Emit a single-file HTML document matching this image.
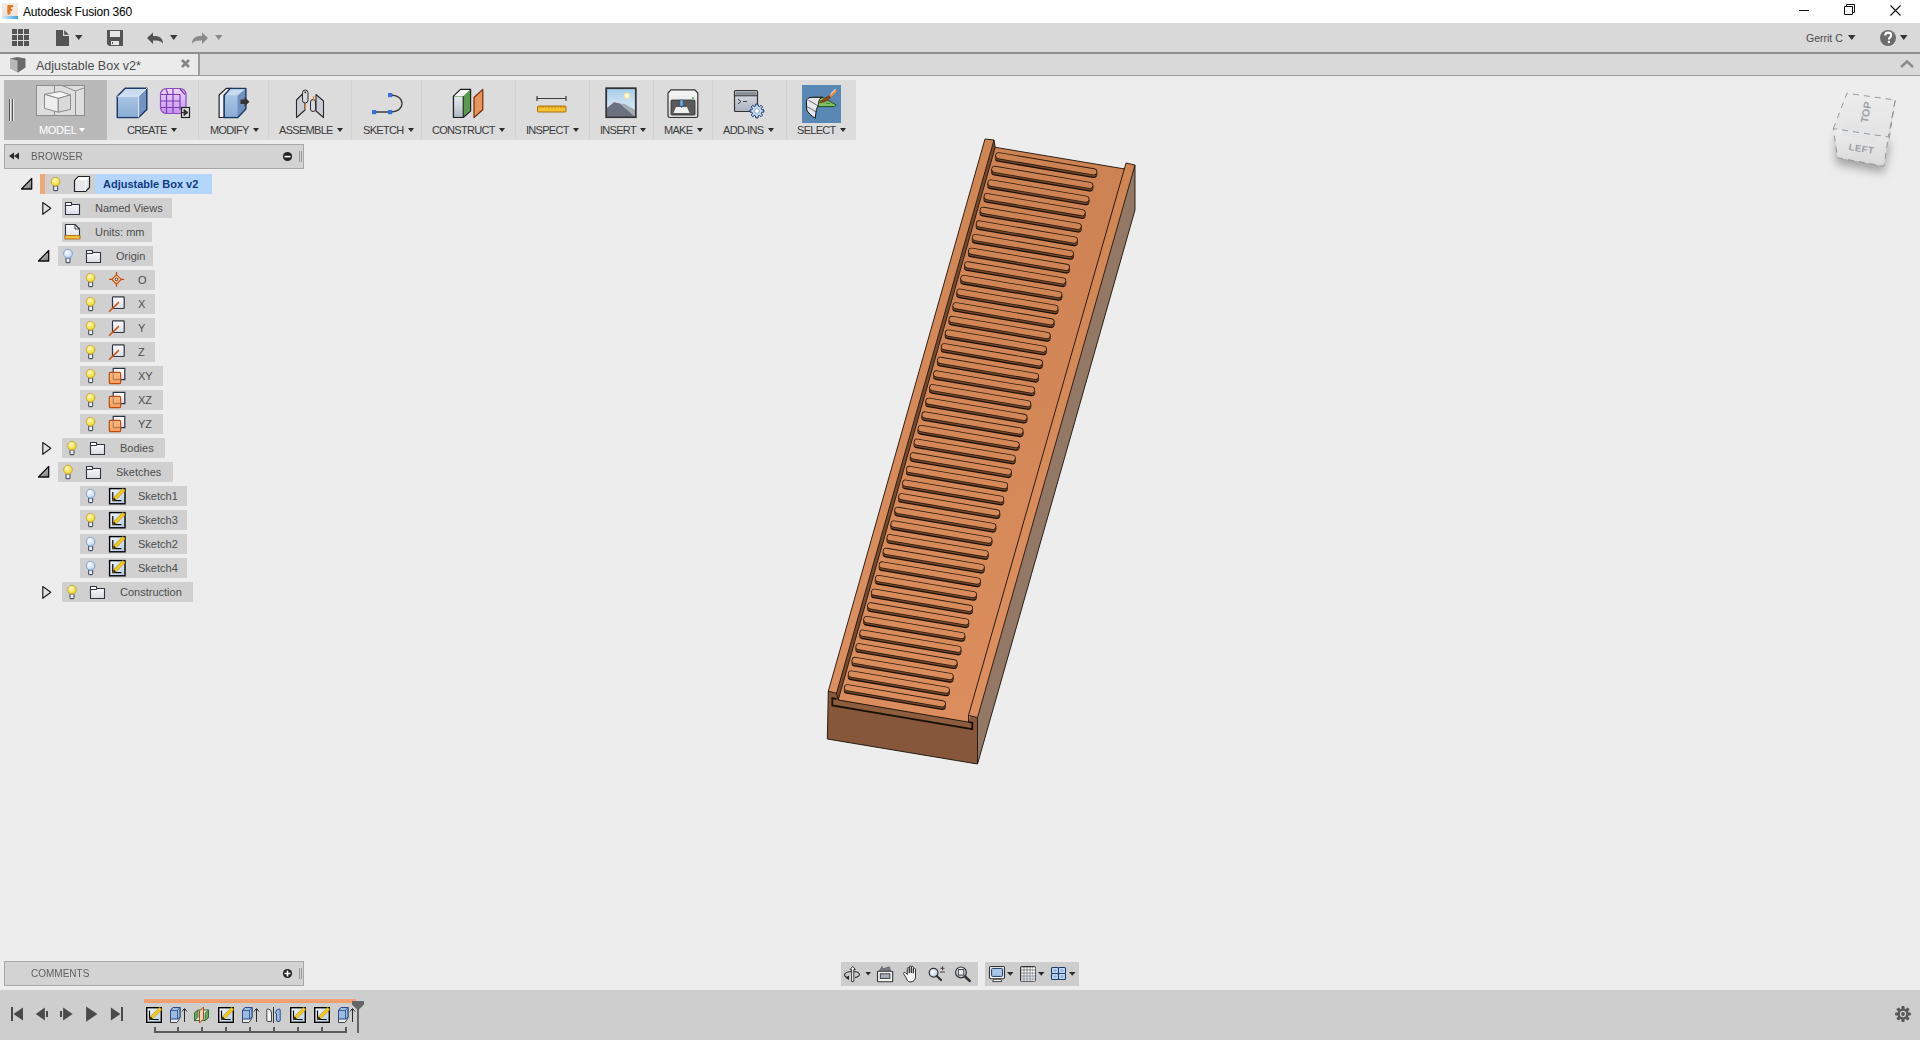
<!DOCTYPE html>
<html><head><meta charset="utf-8">
<style>
*{margin:0;padding:0;box-sizing:border-box}
html,body{width:1920px;height:1040px;overflow:hidden;background:#ededed;font-family:"Liberation Sans",sans-serif;position:relative}
.a{position:absolute}
svg{position:absolute;overflow:visible}
.t{position:absolute;white-space:nowrap;line-height:1}
.sec{position:absolute;top:80px;height:60px;width:1px;background:#d2d2d2}
.lbl{position:absolute;top:125px;font-size:11px;letter-spacing:-0.7px;color:#3a3a3a;white-space:nowrap;line-height:1}
.dd{display:inline-block;width:0;height:0;border-left:3.5px solid transparent;border-right:3.5px solid transparent;border-top:4px solid #2a2a2a;margin-left:4.5px;vertical-align:2px}
.row{position:absolute;height:20px;background:#d0d0d0}
.rt{position:absolute;font-size:11px;color:#4d4d4d;white-space:nowrap;line-height:1}
</style></head><body>
<!-- ============ TITLE BAR ============ -->
<div class="a" style="left:0;top:0;width:1920px;height:23px;background:#fff"></div>
<svg style="left:0;top:0" width="24" height="23">
<defs><linearGradient id="fi" x1="0" y1="0" x2="0" y2="1"><stop offset="0" stop-color="#f4ece6"/><stop offset="1" stop-color="#efe4dc"/></linearGradient>
<linearGradient id="fb" x1="0" y1="0" x2="1" y2="0"><stop offset="0" stop-color="#d8eefc"/><stop offset="1" stop-color="#3aa0e0"/></linearGradient></defs>
<rect x="2" y="3" width="16" height="13" fill="url(#fi)"/>
<rect x="2" y="16" width="16" height="3" fill="url(#fb)"/>
<path d="M7.5 5 L13 5 L13.5 7 L11 7.5 L11 9 L12.5 9 L12 11 L10.5 11 L10.5 14 L8 15 L7.2 12 Z" fill="#e07a28"/>
</svg>
<div class="t" style="left:23px;top:6px;font-size:12px;letter-spacing:-0.2px;color:#000">Autodesk Fusion 360</div>
<svg style="left:1790px;top:0" width="130" height="23">
<rect x="9" y="10" width="10" height="1" fill="#111"/>
<path d="M54.5 6.5 h8 v8 h-8 z M56.5 6.5 v-2 h8 v8 h-2" fill="none" stroke="#111" stroke-width="1"/>
<path d="M100.5 5.5 L110.5 15.5 M110.5 5.5 L100.5 15.5" stroke="#111" stroke-width="1.1"/>
</svg>
<!-- ============ QAT ============ -->
<div class="a" style="left:0;top:23px;width:1920px;height:29px;background:#d9d9d9"></div>
<div class="a" style="left:0;top:52px;width:1920px;height:2px;background:#8e8e8e"></div>
<svg style="left:0;top:23px" width="240" height="29" fill="#545454">
<g><rect x="12" y="6" width="5" height="5"/><rect x="18" y="6" width="5" height="5"/><rect x="24" y="6" width="5" height="5"/>
<rect x="12" y="12" width="5" height="5"/><rect x="18" y="12" width="5" height="5"/><rect x="24" y="12" width="5" height="5"/>
<rect x="12" y="18" width="5" height="5"/><rect x="18" y="18" width="5" height="5"/><rect x="24" y="18" width="5" height="5"/></g>
<path d="M56 7 h7 v6 h6 v10 h-13 z M64.2 7 L69 11.8 h-4.8 z"/>
<path d="M75 12 h7.5 l-3.75 5 z" fill="#3a3a3a"/>
<path d="M107 7 h16 v16 h-14 l-2 -2 z" />
<rect x="110" y="8" width="10" height="6" fill="#e6e6e6"/>
<rect x="111" y="18" width="8" height="4" fill="#e6e6e6"/>
<rect x="112" y="19" width="1" height="2" fill="#545454"/>
<path d="M147 15 L153 9.5 V13 C159 13 163 14.5 163 21 C161.5 18 158.5 17.5 153 17.5 V21 Z"/>
<path d="M170 12 h7.5 l-3.75 5 z" fill="#3a3a3a"/>
<path d="M208 15 L202 9.5 V13 C196 13 192 14.5 192 21 C193.5 18 196.5 17.5 202 17.5 V21 Z" fill="#8a8a8a"/>
<path d="M215 12 h7.5 l-3.75 5 z" fill="#8a8a8a"/>
</svg>
<div class="t" style="left:1806px;top:33px;font-size:10.5px;color:#4a4a4a">Gerrit C</div>
<svg style="left:1840px;top:23px" width="80" height="29">
<path d="M8 12 h7.5 l-3.75 5 z" fill="#333"/>
<circle cx="48" cy="15" r="8" fill="#6c6c6c"/>
<path d="M45.2 12.6 C45.2 10.6 46.5 9.6 48.2 9.6 C50 9.6 51.2 10.7 51.2 12.2 C51.2 14 48.9 14.4 48.9 16.4" fill="none" stroke="#fff" stroke-width="2.1"/>
<rect x="47.8" y="17.8" width="2.2" height="2.3" fill="#fff"/>
<path d="M60 12 h7.5 l-3.75 5 z" fill="#333"/>
</svg>
<!-- ============ TAB BAR ============ -->
<div class="a" style="left:0;top:54px;width:1920px;height:21px;background:#d9d9d9"></div>
<div class="a" style="left:0;top:54px;width:198px;height:21px;background:#ebebeb"></div>
<div class="a" style="left:198px;top:54px;width:2px;height:21px;background:#9c9c9c"></div>
<div class="a" style="left:0;top:75px;width:1920px;height:1px;background:#9c9c9c"></div>
<svg style="left:0;top:54px" width="200" height="21">
<path d="M10 4.5 L17.5 3 L25.5 4.5 V13.5 L18 18.5 L10 14 Z" fill="#6a6a6a"/>
<path d="M10 4.5 L17.5 6.5 V18.5 L10 14 Z" fill="#b8b8b8"/>
<path d="M182 6 L189 13 M189 6 L182 13" stroke="#858585" stroke-width="2.6"/>
</svg>
<div class="t" style="left:36px;top:60px;font-size:12.5px;color:#4a4a4a">Adjustable Box v2*</div>
<svg style="left:1895px;top:54px" width="25" height="21">
<path d="M6 13 L12 7.5 L18 13" fill="none" stroke="#8a8a8a" stroke-width="2.4"/>
</svg>
<!-- ============ TOOLBAR ============ -->
<div class="a" style="left:4px;top:80px;width:852px;height:60px;background:#dcdcdc"></div>
<div class="a" style="left:4px;top:80px;width:103px;height:60px;background:#b9b9b9"></div>
<div class="sec" style="left:198px"></div>
<div class="sec" style="left:268px"></div>
<div class="sec" style="left:351px"></div>
<div class="sec" style="left:421px"></div>
<div class="sec" style="left:515px"></div>
<div class="sec" style="left:589px"></div>
<div class="sec" style="left:653px"></div>
<div class="sec" style="left:712px"></div>
<div class="sec" style="left:786px"></div>
<div class="a" style="left:802px;top:85px;width:39px;height:38px;background:#5a88b4"></div>
<svg style="left:0;top:0" width="860" height="140">
<defs>
<linearGradient id="gblue" x1="0" y1="0" x2="0" y2="1"><stop offset="0" stop-color="#a9c4e4"/><stop offset="1" stop-color="#8badd6"/></linearGradient>
<linearGradient id="gpur" x1="0" y1="0" x2="0" y2="1"><stop offset="0" stop-color="#ecd8fa"/><stop offset="1" stop-color="#c890f0"/></linearGradient>
<linearGradient id="ggray" x1="0" y1="0" x2="0" y2="1"><stop offset="0" stop-color="#e6e9ee"/><stop offset="1" stop-color="#b4bccb"/></linearGradient>
<linearGradient id="gsky" x1="0" y1="0" x2="0" y2="1"><stop offset="0" stop-color="#a6cdea"/><stop offset="1" stop-color="#eaf4fb"/></linearGradient>
<linearGradient id="gwin" x1="0" y1="0" x2="0" y2="1"><stop offset="0" stop-color="#dfe2e8"/><stop offset="1" stop-color="#a9b0c0"/></linearGradient>
<linearGradient id="gmake" x1="0" y1="0" x2="0" y2="1"><stop offset="0" stop-color="#f6f6f6"/><stop offset="1" stop-color="#d6d6d6"/></linearGradient>
</defs>
<!-- grip -->
<rect x="9" y="99" width="1" height="22" fill="#555"/><rect x="12" y="99" width="1" height="22" fill="#555"/>
<rect x="10" y="99" width="1" height="22" fill="#e8e8e8"/><rect x="13" y="99" width="1" height="22" fill="#e8e8e8"/>
<!-- MODEL icon -->
<rect x="36.5" y="85.5" width="48" height="30" fill="#dedede" stroke="#8c8c8c" stroke-width="1"/>
<path d="M54.5 85.5 V115.5 M75.5 91 V115.5 M62 85.5 L75.5 91 L84.5 87.8" fill="none" stroke="#8c8c8c" stroke-width="1"/>
<path d="M44.5 94.3 L60.3 91.5 L70.5 94.9 L58.3 98.4 Z" fill="#f6f6f6" stroke="#8c8c8c"/>
<path d="M44.5 94.3 L58.3 98.4 V112.2 L44.5 108.3 Z" fill="#eeeeee" stroke="#8c8c8c"/>
<path d="M58.3 98.4 L70.5 94.9 V109.4 L58.3 112.2 Z" fill="#dadada" stroke="#8c8c8c"/>
<!-- CREATE box -->
<path d="M117.3 96.2 L125.2 88.2 H146.8 V109.5 L138.6 117.5 H117.3 Z" fill="#7393c0" stroke="#1d3966" stroke-width="1.5" stroke-linejoin="round"/>
<path d="M118.3 96.5 L125.6 89 H146 L138.3 96.5 Z" fill="#c9dcef"/>
<rect x="118" y="96.8" width="20" height="20" fill="url(#gblue)"/>
<path d="M138.6 96.2 H117.3 M138.6 96.2 V117.5 M138.6 96.2 L146.8 88.2" stroke="#e6f0fa" stroke-width="1"/>
<!-- CREATE form -->
<rect x="160.5" y="88.5" width="25.5" height="25" rx="6" fill="url(#gpur)" stroke="#8a4cc0" stroke-width="1.2"/>
<path d="M161 94.5 H180 M161 101 H180 M161 107.5 H180 M166.5 94.5 V113 M173 94.5 V113 M180 94.5 V110 M166 89 L168 94.5 M173 89 L173 94.5 M180 89 L185 94.5" stroke="#7a3cb0" stroke-width="1.2" fill="none"/>
<rect x="181.5" y="107.5" width="8" height="10" fill="#e0e0e0" stroke="#222" stroke-width="1.2"/>
<path d="M181.5 112.5 H184 M184 109.5 L188 112.5 L184 115.5 Z" fill="#333" stroke="#333" stroke-width="1"/>
<!-- MODIFY -->
<path d="M219.1 95 L226.3 88.4 H231 L224.2 95.2 V117.5 H219.1 Z" fill="#f2f2f2" stroke="#222" stroke-width="1.2" stroke-linejoin="round"/>
<path d="M224.2 95.2 L230.3 88.4 H245.9 V109 L237.8 117.5 H224.2 Z" fill="#7090bd" stroke="#1d3966" stroke-width="1.4" stroke-linejoin="round"/>
<path d="M225 95.8 L230.8 89.2 H245 L237.3 95.8 Z" fill="#c9dcef"/>
<rect x="225" y="96" width="12.5" height="20.8" fill="url(#gblue)"/>
<path d="M240.5 99.5 H244.5 V97 L249.5 101.8 L244.5 106.5 V104 H240.5 Z" fill="#333"/>
<!-- ASSEMBLE -->
<path d="M296.5 100 L305 91.5 V110 L296.5 117.5 Z" fill="#c8ccd4" stroke="#2a2a2a" stroke-width="1.1" stroke-linejoin="round"/>
<rect x="302.5" y="90" width="5.5" height="13" rx="2.7" fill="#d6d9de" stroke="#2a2a2a" stroke-width="1"/>
<circle cx="305.3" cy="92.3" r="0.9" fill="#222"/>
<path d="M316 94.5 L323.5 101 V117.5 L316 111 Z" fill="#c8ccd4" stroke="#2a2a2a" stroke-width="1.1" stroke-linejoin="round"/>
<rect x="310.5" y="99.5" width="5" height="12" rx="2.5" fill="#d6d9de" stroke="#2a2a2a" stroke-width="1"/>
<path d="M305.5 103.5 V109 M313.5 96 V100.5" stroke="#f07a10" stroke-width="1"/>
<!-- SKETCH -->
<path d="M374 112 H390 M390 95 C398 95 402 99 402 103.5 C402 108 398 112 390 112" fill="none" stroke="#3c3c3c" stroke-width="1.3"/>
<rect x="372" y="110" width="4.2" height="4.2" fill="#3a6fd8"/><rect x="388" y="110" width="4.2" height="4.2" fill="#3a6fd8"/><rect x="388" y="93" width="4.2" height="4.2" fill="#3a6fd8"/>
<!-- CONSTRUCT -->
<path d="M453.4 96.2 L460.5 89.4 H470.6 V111.1 L463.2 117.5 H453.4 Z" fill="#5b9a4c" stroke="#1e1e1e" stroke-width="1.2" stroke-linejoin="round"/>
<path d="M454.2 96.2 L460.8 90.1 H469.6 L463.2 96.2 Z" fill="#f4f4f6"/>
<rect x="454.2" y="96.8" width="8.7" height="20" fill="url(#ggray)"/>
<path d="M463.2 96.2 V117.5" stroke="#1e1e1e" stroke-width="1"/>
<path d="M474 97.5 L482.8 89.4 V109.7 L474 117.5 Z" fill="#e8945a" stroke="#7a2a06" stroke-width="1.2" stroke-linejoin="round"/>
<!-- INSPECT -->
<path d="M537 98.5 H566 M537 96 V101 M566 96 V101" stroke="#3a3a3a" stroke-width="1.2"/>
<rect x="537.5" y="106" width="28.5" height="6" rx="1" fill="#f2c232" stroke="#b26c10" stroke-width="1"/>
<path d="M540 106.5 V108 M543 106.5 V108 M546 106.5 V108 M549 106.5 V108 M552 106.5 V108 M555 106.5 V108 M558 106.5 V108 M561 106.5 V108 M564 106.5 V108" stroke="#a06010" stroke-width="0.8"/>
<!-- INSERT -->
<rect x="606.3" y="88.3" width="29.4" height="29" fill="url(#gsky)" stroke="#333" stroke-width="1.5"/>
<circle cx="627" cy="95.8" r="2.8" fill="#fffbe0" stroke="#f6e08a" stroke-width="1"/>
<path d="M607 108 L614.5 101.8 L620 103 L636 117 H607 Z" fill="#6a7080"/>
<path d="M614.5 101.8 L620 103 L635.5 116.5" fill="none" stroke="#f0f0f0" stroke-width="0.8"/>
<path d="M620 103.5 L624.7 104.1 L635.5 110 V117 Z" fill="#a3abb5"/>
<rect x="606.3" y="88.3" width="29.4" height="29" fill="none" stroke="#333" stroke-width="1.5"/>
<!-- MAKE -->
<path d="M668 93 L671 89.8 H694.8 L697.8 93 V116 Q697.8 117.5 696 117.5 H670 Q668 117.5 668 116 Z" fill="url(#gmake)" stroke="#333" stroke-width="1.2"/>
<rect x="671" y="100" width="24" height="15" rx="1" fill="#5a5a5a" stroke="#333" stroke-width="0.8"/>
<path d="M673.5 113 L676 107 H687 L689.5 113 Z" fill="#f0f0f0"/>
<rect x="680" y="100" width="3" height="6" fill="#7ab0e0" stroke="#2a5a9a" stroke-width="0.6"/>
<path d="M680 106 L681.5 108 L683 106" fill="#2a5a9a"/>
<rect x="692.2" y="97.3" width="1.5" height="1.5" fill="#10a010"/>
<!-- ADD-INS -->
<rect x="734.5" y="90.5" width="23" height="21" rx="1" fill="url(#gwin)" stroke="#333" stroke-width="1.2"/>
<rect x="735.5" y="91.5" width="21" height="4" fill="#8a909a"/>
<path d="M734.5 95.8 H757.5" stroke="#333" stroke-width="1"/>
<path d="M738 99 L741 101.5 L738 104 M743 101.5 H747" fill="none" stroke="#333" stroke-width="0.9"/>
<path d="M761.97 109.83 L763.81 109.85 L763.81 112.15 L761.97 112.17 L761.31 113.75 L762.60 115.07 L760.97 116.70 L759.65 115.41 L758.07 116.07 L758.05 117.91 L755.75 117.91 L755.73 116.07 L754.15 115.41 L752.83 116.70 L751.20 115.07 L752.49 113.75 L751.83 112.17 L749.99 112.15 L749.99 109.85 L751.83 109.83 L752.49 108.25 L751.20 106.93 L752.83 105.30 L754.15 106.59 L755.73 105.93 L755.75 104.09 L758.05 104.09 L758.07 105.93 L759.65 106.59 L760.97 105.30 L762.60 106.93 L761.31 108.25 Z" fill="#c4dbf2" stroke="#1b3363" stroke-width="1"/>
<circle cx="756.9" cy="111" r="2.4" fill="#fff" stroke="#5a7aa0" stroke-width="0.6"/>
<!-- SELECT -->
<path d="M812 97.3 H822.7 L836.2 105 L834.6 106.6 H818.6 Z" fill="#80c064" stroke="#1d4a12" stroke-width="0.9" stroke-linejoin="round"/>
<path d="M820 101 L824 101 M826 103.5 L830 103.5" stroke="#4a8a36" stroke-width="1.2"/>
<path d="M806.4 101.8 C806.4 98.6 809 97.3 812 97.3 H822.5 C819.6 97.8 818.6 100.5 818.6 104.5 L816.4 109.5 L815.2 118.3 C811 115.5 807.8 112.5 806.8 110 Z" fill="#e6e8ec" stroke="#111" stroke-width="1" stroke-linejoin="round"/>
<path d="M808.5 100.2 L818 105.8 M807.2 106.8 L816.4 112" stroke="#333" stroke-width="0.7"/>
<path d="M819.8 102.2 C822.5 99 826 97 829.5 95.5 L831 97.2 C828.5 100 825 102.5 820.6 103 Z" fill="#8a4a18" stroke="#5a2a08" stroke-width="0.4"/>
<path d="M829.5 95.5 L835 89.5 L837 91.3 L831 97.2 Z" fill="#f09040"/>
<path d="M830.5 94.2 L835.6 89" stroke="#fff" stroke-width="0.9"/>
</svg>
<div class="lbl" style="left:39px;color:#fff;letter-spacing:-0.3px">MODEL<span class="dd" style="border-top-color:#fff;margin-left:2.5px"></span></div>
<div class="lbl" style="left:127px">CREATE<span class="dd"></span></div>
<div class="lbl" style="left:210px">MODIFY<span class="dd"></span></div>
<div class="lbl" style="left:279px">ASSEMBLE<span class="dd"></span></div>
<div class="lbl" style="left:363px">SKETCH<span class="dd"></span></div>
<div class="lbl" style="left:432px">CONSTRUCT<span class="dd"></span></div>
<div class="lbl" style="left:526px">INSPECT<span class="dd"></span></div>
<div class="lbl" style="left:600px">INSERT<span class="dd"></span></div>
<div class="lbl" style="left:664px">MAKE<span class="dd"></span></div>
<div class="lbl" style="left:723px">ADD-INS<span class="dd"></span></div>
<div class="lbl" style="left:797px">SELECT<span class="dd"></span></div>

<!-- ============ BROWSER ============ -->
<div class="a" style="left:4px;top:144px;width:300px;height:25px;background:#d3d3d3;border:1px solid #a8a8a8"></div>
<div class="t" style="left:31px;top:151px;font-size:10px;color:#5e5e5e;transform:scaleY(1.1);transform-origin:0 0">BROWSER</div>
<div class="row" style="left:40px;top:174px;width:5px;background:#f0a878"></div>
<div class="row" style="left:45px;top:174px;width:50px"></div>
<div class="row" style="left:95px;top:174px;width:117px;background:#b4d6fc"></div>
<div class="rt" style="left:103px;top:179px;font-weight:bold;color:#103a80;font-size:11px">Adjustable Box v2</div>
<div class="row" style="left:62px;top:198px;width:110px"></div>
<div class="rt" style="left:95px;top:203px">Named Views</div>
<div class="row" style="left:62px;top:222px;width:90px"></div>
<div class="rt" style="left:95px;top:227px">Units: mm</div>
<div class="row" style="left:58px;top:246px;width:95px"></div>
<div class="rt" style="left:116px;top:251px">Origin</div>
<div class="row" style="left:80px;top:270px;width:75px"></div>
<div class="rt" style="left:138px;top:275px">O</div>
<div class="row" style="left:80px;top:294px;width:75px"></div>
<div class="rt" style="left:138px;top:299px">X</div>
<div class="row" style="left:80px;top:318px;width:75px"></div>
<div class="rt" style="left:138px;top:323px">Y</div>
<div class="row" style="left:80px;top:342px;width:75px"></div>
<div class="rt" style="left:138px;top:347px">Z</div>
<div class="row" style="left:80px;top:366px;width:83px"></div>
<div class="rt" style="left:138px;top:371px">XY</div>
<div class="row" style="left:80px;top:390px;width:83px"></div>
<div class="rt" style="left:138px;top:395px">XZ</div>
<div class="row" style="left:80px;top:414px;width:83px"></div>
<div class="rt" style="left:138px;top:419px">YZ</div>
<div class="row" style="left:62px;top:438px;width:103px"></div>
<div class="rt" style="left:120px;top:443px">Bodies</div>
<div class="row" style="left:58px;top:462px;width:115px"></div>
<div class="rt" style="left:116px;top:467px">Sketches</div>
<div class="row" style="left:80px;top:486px;width:107px"></div>
<div class="rt" style="left:138px;top:491px">Sketch1</div>
<div class="row" style="left:80px;top:510px;width:107px"></div>
<div class="rt" style="left:138px;top:515px">Sketch3</div>
<div class="row" style="left:80px;top:534px;width:107px"></div>
<div class="rt" style="left:138px;top:539px">Sketch2</div>
<div class="row" style="left:80px;top:558px;width:107px"></div>
<div class="rt" style="left:138px;top:563px">Sketch4</div>
<div class="row" style="left:62px;top:582px;width:131px"></div>
<div class="rt" style="left:120px;top:587px">Construction</div>
<svg style="left:0;top:0" width="320" height="620">
<defs>
<radialGradient id="by" cx="0.4" cy="0.35" r="0.7"><stop offset="0" stop-color="#fffbd0"/><stop offset="0.5" stop-color="#f8e860"/><stop offset="1" stop-color="#e8c830"/></radialGradient>
<radialGradient id="bb" cx="0.4" cy="0.35" r="0.7"><stop offset="0" stop-color="#ffffff"/><stop offset="0.6" stop-color="#d4e2f8"/><stop offset="1" stop-color="#b0c8ee"/></radialGradient>
<linearGradient id="tg" x1="0" y1="0" x2="1" y2="1"><stop offset="0" stop-color="#f0f0f0"/><stop offset="1" stop-color="#707070"/></linearGradient>
<linearGradient id="fg" x1="0" y1="0" x2="0" y2="1"><stop offset="0" stop-color="#ffffff"/><stop offset="1" stop-color="#d8dce4"/></linearGradient>
<linearGradient id="sg" x1="0" y1="0" x2="1" y2="1"><stop offset="0" stop-color="#f4f8fc"/><stop offset="1" stop-color="#b4cce6"/></linearGradient>
<linearGradient id="og" x1="0" y1="0" x2="0" y2="1"><stop offset="0" stop-color="#ffc08a"/><stop offset="1" stop-color="#f89a58"/></linearGradient>
</defs>
<path d="M9 156 L14 152.5 V159.5 Z M14 156 L19 152.5 V159.5 Z" fill="#2a2a2a"/>
<circle cx="287.5" cy="156.5" r="4.6" fill="#222"/><rect x="284.5" y="155.8" width="6" height="1.6" fill="#fff"/>
<path d="M299.5 151 V162 M301.5 151 V162" stroke="#888" stroke-width="0.8"/>
<path d="M21.5 189 L31.7 178.5 V189 Z" fill="url(#tg)" stroke="#111" stroke-width="1.3" stroke-linejoin="round"/>
<rect x="53.6" y="186" width="4" height="4.6" rx="0.8" fill="#eceef2" stroke="#4e5464" stroke-width="1.1"/>
<circle cx="55.6" cy="181.7" r="4.4" fill="url(#by)" stroke="#c8a030" stroke-width="0.9"/>
<path d="M74.5 180.5 L78.5 176.5 H89.5 V187.5 L85.5 191.5 H74.5 Z" fill="#e6e8ec" stroke="#222" stroke-width="1.2" stroke-linejoin="round"/>
<path d="M75.2 180.5 L78.8 177.2 H88.5 L85.5 180.5 Z" fill="#fff"/>
<path d="M85.5 180.5 L89 177" stroke="#fff" stroke-width="1"/><path d="M85.5 181 V191" stroke="#fafafa" stroke-width="1"/>
<path d="M42.8 202.5 L50.8 208.2 L42.8 214.3 Z" fill="#e4e4e4" stroke="#1e1e1e" stroke-width="1.2" stroke-linejoin="round"/>
<path d="M65.5 202.5 H71.5 V204.5 H79.5 V214.5 H65.5 Z" fill="url(#fg)" stroke="#2e3440" stroke-width="1.1" stroke-linejoin="round"/>
<path d="M65.5 205.5 H71.5 L72.5 204.5" fill="none" stroke="#2e3440" stroke-width="1"/>
<path d="M65.5 224.5 H75 L79.5 229 V238.5 H65.5 Z" fill="url(#fg)" stroke="#2e3440" stroke-width="1.1" stroke-linejoin="round"/>
<path d="M75 224.5 V229 H79.5" fill="none" stroke="#2e3440" stroke-width="0.9"/>
<rect x="65" y="235.5" width="15" height="3.5" fill="#f2c232" stroke="#a06010" stroke-width="0.8"/>
<path d="M38.5 261 L48.7 250.5 V261 Z" fill="url(#tg)" stroke="#111" stroke-width="1.3" stroke-linejoin="round"/>
<rect x="66" y="258" width="4" height="4.6" rx="0.8" fill="#eceef2" stroke="#4e5464" stroke-width="1.1"/>
<circle cx="68" cy="253.7" r="4.4" fill="url(#bb)" stroke="#7898c8" stroke-width="0.9"/>
<path d="M86.5 250.5 H92.5 V252.5 H100.5 V262.5 H86.5 Z" fill="url(#fg)" stroke="#2e3440" stroke-width="1.1" stroke-linejoin="round"/>
<path d="M86.5 253.5 H92.5 L93.5 252.5" fill="none" stroke="#2e3440" stroke-width="1"/>
<rect x="88.6" y="282" width="4" height="4.6" rx="0.8" fill="#eceef2" stroke="#4e5464" stroke-width="1.1"/>
<circle cx="90.6" cy="277.7" r="4.4" fill="url(#by)" stroke="#c8a030" stroke-width="0.9"/>
<path d="M109.1 279.4 H123.9 M116.5 272.0 V286.79999999999995" stroke="#c84a08" stroke-width="1.2"/>
<path d="M111.8 279.4 L116.5 274.7 L121.2 279.4 L116.5 284.09999999999997 Z" fill="#ffc8a0" stroke="#c84a08" stroke-width="1.1"/>
<circle cx="116.5" cy="279.4" r="1.3" fill="#fff" stroke="#222" stroke-width="0.9"/>
<rect x="88.6" y="306" width="4" height="4.6" rx="0.8" fill="#eceef2" stroke="#4e5464" stroke-width="1.1"/>
<circle cx="90.6" cy="301.7" r="4.4" fill="url(#by)" stroke="#c8a030" stroke-width="0.9"/>
<rect x="112.5" y="296.8" width="11.7" height="11.7" rx="0.8" fill="url(#fg)" stroke="#2e3440" stroke-width="1.2"/>
<path d="M109.5 311.2 L118.5 302.6" stroke="#d05010" stroke-width="1.5" stroke-linecap="round"/>
<rect x="88.6" y="330" width="4" height="4.6" rx="0.8" fill="#eceef2" stroke="#4e5464" stroke-width="1.1"/>
<circle cx="90.6" cy="325.7" r="4.4" fill="url(#by)" stroke="#c8a030" stroke-width="0.9"/>
<rect x="112.5" y="320.8" width="11.7" height="11.7" rx="0.8" fill="url(#fg)" stroke="#2e3440" stroke-width="1.2"/>
<path d="M109.5 335.2 L118.5 326.6" stroke="#d05010" stroke-width="1.5" stroke-linecap="round"/>
<rect x="88.6" y="354" width="4" height="4.6" rx="0.8" fill="#eceef2" stroke="#4e5464" stroke-width="1.1"/>
<circle cx="90.6" cy="349.7" r="4.4" fill="url(#by)" stroke="#c8a030" stroke-width="0.9"/>
<rect x="112.5" y="344.8" width="11.7" height="11.7" rx="0.8" fill="url(#fg)" stroke="#2e3440" stroke-width="1.2"/>
<path d="M109.5 359.2 L118.5 350.6" stroke="#d05010" stroke-width="1.5" stroke-linecap="round"/>
<rect x="88.6" y="378" width="4" height="4.6" rx="0.8" fill="#eceef2" stroke="#4e5464" stroke-width="1.1"/>
<circle cx="90.6" cy="373.7" r="4.4" fill="url(#by)" stroke="#c8a030" stroke-width="0.9"/>
<path d="M113.2 372 V368.4 H124.8 V379.7 H121" fill="url(#fg)" stroke="#2e3440" stroke-width="1.2"/>
<rect x="109.3" y="372.3" width="11.3" height="11.3" rx="1" fill="url(#og)" stroke="#c04c10" stroke-width="1.2"/>
<path d="M113.2 373 V379.6 H120" fill="none" stroke="#8a6a50" stroke-width="0.8"/>
<rect x="88.6" y="402" width="4" height="4.6" rx="0.8" fill="#eceef2" stroke="#4e5464" stroke-width="1.1"/>
<circle cx="90.6" cy="397.7" r="4.4" fill="url(#by)" stroke="#c8a030" stroke-width="0.9"/>
<path d="M113.2 396 V392.4 H124.8 V403.7 H121" fill="url(#fg)" stroke="#2e3440" stroke-width="1.2"/>
<rect x="109.3" y="396.3" width="11.3" height="11.3" rx="1" fill="url(#og)" stroke="#c04c10" stroke-width="1.2"/>
<path d="M113.2 397 V403.6 H120" fill="none" stroke="#8a6a50" stroke-width="0.8"/>
<rect x="88.6" y="426" width="4" height="4.6" rx="0.8" fill="#eceef2" stroke="#4e5464" stroke-width="1.1"/>
<circle cx="90.6" cy="421.7" r="4.4" fill="url(#by)" stroke="#c8a030" stroke-width="0.9"/>
<path d="M113.2 420 V416.4 H124.8 V427.7 H121" fill="url(#fg)" stroke="#2e3440" stroke-width="1.2"/>
<rect x="109.3" y="420.3" width="11.3" height="11.3" rx="1" fill="url(#og)" stroke="#c04c10" stroke-width="1.2"/>
<path d="M113.2 421 V427.6 H120" fill="none" stroke="#8a6a50" stroke-width="0.8"/>
<path d="M42.8 442.5 L50.8 448.2 L42.8 454.3 Z" fill="#e4e4e4" stroke="#1e1e1e" stroke-width="1.2" stroke-linejoin="round"/>
<rect x="70" y="450" width="4" height="4.6" rx="0.8" fill="#eceef2" stroke="#4e5464" stroke-width="1.1"/>
<circle cx="72" cy="445.7" r="4.4" fill="url(#by)" stroke="#c8a030" stroke-width="0.9"/>
<path d="M90.5 442.5 H96.5 V444.5 H104.5 V454.5 H90.5 Z" fill="url(#fg)" stroke="#2e3440" stroke-width="1.1" stroke-linejoin="round"/>
<path d="M90.5 445.5 H96.5 L97.5 444.5" fill="none" stroke="#2e3440" stroke-width="1"/>
<path d="M38.5 477 L48.7 466.5 V477 Z" fill="url(#tg)" stroke="#111" stroke-width="1.3" stroke-linejoin="round"/>
<rect x="66" y="474" width="4" height="4.6" rx="0.8" fill="#eceef2" stroke="#4e5464" stroke-width="1.1"/>
<circle cx="68" cy="469.7" r="4.4" fill="url(#by)" stroke="#c8a030" stroke-width="0.9"/>
<path d="M86.5 466.5 H92.5 V468.5 H100.5 V478.5 H86.5 Z" fill="url(#fg)" stroke="#2e3440" stroke-width="1.1" stroke-linejoin="round"/>
<path d="M86.5 469.5 H92.5 L93.5 468.5" fill="none" stroke="#2e3440" stroke-width="1"/>
<rect x="88.6" y="498" width="4" height="4.6" rx="0.8" fill="#eceef2" stroke="#4e5464" stroke-width="1.1"/>
<circle cx="90.6" cy="493.7" r="4.4" fill="url(#bb)" stroke="#7898c8" stroke-width="0.9"/>
<rect x="109.6" y="488.6" width="15.4" height="15.2" fill="url(#sg)" stroke="#000" stroke-width="1.4"/>
<path d="M112.8 492 V500.6 H121.5" fill="none" stroke="#000" stroke-width="1.2"/>
<path d="M112.8 500.6 L113.6 497.6 L122.8 488.4 L125.2 490.6 L116 499.8 Z" fill="#f0c820" stroke="#b08000" stroke-width="0.5"/>
<path d="M112.8 500.6 L113.8 497.6 L116 499.6 Z" fill="#222"/>
<rect x="88.6" y="522" width="4" height="4.6" rx="0.8" fill="#eceef2" stroke="#4e5464" stroke-width="1.1"/>
<circle cx="90.6" cy="517.7" r="4.4" fill="url(#by)" stroke="#c8a030" stroke-width="0.9"/>
<rect x="109.6" y="512.6" width="15.4" height="15.2" fill="url(#sg)" stroke="#000" stroke-width="1.4"/>
<path d="M112.8 516 V524.6 H121.5" fill="none" stroke="#000" stroke-width="1.2"/>
<path d="M112.8 524.6 L113.6 521.6 L122.8 512.4 L125.2 514.6 L116 523.8 Z" fill="#f0c820" stroke="#b08000" stroke-width="0.5"/>
<path d="M112.8 524.6 L113.8 521.6 L116 523.6 Z" fill="#222"/>
<rect x="88.6" y="546" width="4" height="4.6" rx="0.8" fill="#eceef2" stroke="#4e5464" stroke-width="1.1"/>
<circle cx="90.6" cy="541.7" r="4.4" fill="url(#bb)" stroke="#7898c8" stroke-width="0.9"/>
<rect x="109.6" y="536.6" width="15.4" height="15.2" fill="url(#sg)" stroke="#000" stroke-width="1.4"/>
<path d="M112.8 540 V548.6 H121.5" fill="none" stroke="#000" stroke-width="1.2"/>
<path d="M112.8 548.6 L113.6 545.6 L122.8 536.4 L125.2 538.6 L116 547.8 Z" fill="#f0c820" stroke="#b08000" stroke-width="0.5"/>
<path d="M112.8 548.6 L113.8 545.6 L116 547.6 Z" fill="#222"/>
<rect x="88.6" y="570" width="4" height="4.6" rx="0.8" fill="#eceef2" stroke="#4e5464" stroke-width="1.1"/>
<circle cx="90.6" cy="565.7" r="4.4" fill="url(#bb)" stroke="#7898c8" stroke-width="0.9"/>
<rect x="109.6" y="560.6" width="15.4" height="15.2" fill="url(#sg)" stroke="#000" stroke-width="1.4"/>
<path d="M112.8 564 V572.6 H121.5" fill="none" stroke="#000" stroke-width="1.2"/>
<path d="M112.8 572.6 L113.6 569.6 L122.8 560.4 L125.2 562.6 L116 571.8 Z" fill="#f0c820" stroke="#b08000" stroke-width="0.5"/>
<path d="M112.8 572.6 L113.8 569.6 L116 571.6 Z" fill="#222"/>
<path d="M42.8 586.5 L50.8 592.2 L42.8 598.3 Z" fill="#e4e4e4" stroke="#1e1e1e" stroke-width="1.2" stroke-linejoin="round"/>
<rect x="70" y="594" width="4" height="4.6" rx="0.8" fill="#eceef2" stroke="#4e5464" stroke-width="1.1"/>
<circle cx="72" cy="589.7" r="4.4" fill="url(#by)" stroke="#c8a030" stroke-width="0.9"/>
<path d="M90.5 586.5 H96.5 V588.5 H104.5 V598.5 H90.5 Z" fill="url(#fg)" stroke="#2e3440" stroke-width="1.1" stroke-linejoin="round"/>
<path d="M90.5 589.5 H96.5 L97.5 588.5" fill="none" stroke="#2e3440" stroke-width="1"/>
</svg>
<!-- ============ COMMENTS ============ -->
<div class="a" style="left:4px;top:961px;width:300px;height:25px;background:#d3d3d3;border:1px solid #a8a8a8"></div>
<div class="t" style="left:31px;top:968px;font-size:10px;color:#5e5e5e;transform:scaleY(1.1);transform-origin:0 0">COMMENTS</div>
<svg style="left:0;top:0" width="320" height="1040">
<circle cx="287.5" cy="973.5" r="4.6" fill="#222"/><path d="M284.5 973.5 H290.5 M287.5 970.5 V976.5" stroke="#fff" stroke-width="1.6"/>
<path d="M299.5 968 V979 M301.5 968 V979" stroke="#888" stroke-width="0.8"/>
</svg>
<!-- ============ NAV BAR ============ -->
<div class="a" style="left:841px;top:962px;width:137px;height:24px;background:#cdcdcd"></div>
<div class="a" style="left:985px;top:962px;width:94px;height:24px;background:#cdcdcd"></div>
<svg style="left:0;top:0" width="1100" height="1000">
<defs>
<linearGradient id="gscr" x1="0" y1="0" x2="0" y2="1"><stop offset="0" stop-color="#a8c4e4"/><stop offset="1" stop-color="#7aa0d0"/></linearGradient>
<radialGradient id="glens" cx="0.4" cy="0.4" r="0.6"><stop offset="0" stop-color="#ffffff"/><stop offset="1" stop-color="#b0c8e0"/></radialGradient>
</defs>
<!-- orbit -->
<path d="M848.5 977.8 C842 976.5 843.5 971.5 852.5 971.5 C861 971.5 861.5 976.5 855 977.6" fill="none" stroke="#2a2a2a" stroke-width="1.1"/>
<path d="M845.5 977.8 L849 975.6 V980 Z" fill="#222"/>
<path d="M851.6 981.6 V969.6 H850 L852.7 966.4 L855.4 969.6 H853.8 V981.6 Z" fill="#f6f6f6" stroke="#2a2a2a" stroke-width="0.9" stroke-linejoin="round"/>
<path d="M865.4 972 h5.6 l-2.8 3.5 z" fill="#2a2a2a"/>
<!-- look at -->
<path d="M879 971.5 L882 966.5 L883 969 L887 967.5 L889.5 967 L890.5 971.5 Z" fill="#7a7e86" stroke="#444" stroke-width="0.6"/>
<rect x="877.5" y="971.3" width="15.2" height="10.4" rx="0.8" fill="#f2f2f2" stroke="#333" stroke-width="1.1"/>
<rect x="880.3" y="973.8" width="9.6" height="4.6" fill="#a8b0c0" stroke="#333" stroke-width="0.9"/>
<!-- pan hand -->
<path d="M906 977.5 L903.8 974.2 C903 973 904.2 971.8 905.4 972.6 L907.3 974.5 V968.5 C907.3 967.3 909.3 967.3 909.3 968.5 V973 V966.8 C909.3 965.6 911.3 965.6 911.3 966.8 V973 V967.2 C911.3 966 913.3 966 913.3 967.2 V973.2 V969.2 C913.3 968 915.5 968 915.5 969.2 V977 C915.5 980 913.5 981.8 911 981.8 H909.5 C907.5 981.8 907 979.5 906 977.5 Z" fill="#f4f4f6" stroke="#333" stroke-width="1"/>
<!-- zoom -->
<circle cx="933.6" cy="972.8" r="4.4" fill="url(#glens)" stroke="#333" stroke-width="1.2"/>
<path d="M936.8 976 L941 980" stroke="#333" stroke-width="2.4" stroke-linecap="round"/>
<path d="M942.5 966.3 v4 M940.5 968.3 h4 M940 972 h5" stroke="#333" stroke-width="0.9"/>
<!-- fit -->
<circle cx="961" cy="972.4" r="5.4" fill="url(#glens)" stroke="#333" stroke-width="1.2"/>
<rect x="958.3" y="969.6" width="5.5" height="5.5" fill="#eceef2" stroke="#333" stroke-width="0.9"/>
<path d="M965 976.5 L969.8 981" stroke="#333" stroke-width="2.4" stroke-linecap="round"/>
<!-- display -->
<defs><linearGradient id="ggrid" x1="0" y1="0" x2="0" y2="1"><stop offset="0" stop-color="#4a4a4a"/><stop offset="1" stop-color="#8890a0"/></linearGradient></defs>
<rect x="989.5" y="966.5" width="15" height="12.2" rx="1.2" fill="#f4f4f4" stroke="#333" stroke-width="1.1"/>
<rect x="991.6" y="968.4" width="11" height="8" rx="1" fill="#a8c6e8" stroke="#1e3a6a" stroke-width="1"/>
<path d="M993.5 979.3 H1001 L1001.8 981.6 H992.7 Z" fill="#f6f6f6" stroke="#333" stroke-width="0.9" stroke-linejoin="round"/>
<path d="M1007 972 h6.5 l-3.25 3.8 z" fill="#2a2a2a"/>
<!-- grid -->
<rect x="1020.5" y="966.5" width="15" height="15" rx="1.2" fill="url(#ggrid)" stroke="#333" stroke-width="1"/>
<g fill="#fff">
<rect x="1021.35" y="967.35" width="2.3" height="2.3"/><rect x="1024.35" y="967.35" width="2.3" height="2.3"/><rect x="1027.35" y="967.35" width="2.3" height="2.3"/><rect x="1030.35" y="967.35" width="2.3" height="2.3"/><rect x="1032.95" y="967.35" width="2.3" height="2.3"/>
<rect x="1021.35" y="970.35" width="2.3" height="2.3"/><rect x="1024.35" y="970.35" width="2.3" height="2.3"/><rect x="1027.35" y="970.35" width="2.3" height="2.3"/><rect x="1030.35" y="970.35" width="2.3" height="2.3"/><rect x="1032.95" y="970.35" width="2.3" height="2.3"/>
<rect x="1021.35" y="973.35" width="2.3" height="2.3" opacity="0.9"/><rect x="1024.35" y="973.35" width="2.3" height="2.3" opacity="0.9"/><rect x="1027.35" y="973.35" width="2.3" height="2.3" opacity="0.9"/><rect x="1030.35" y="973.35" width="2.3" height="2.3" opacity="0.9"/><rect x="1032.95" y="973.35" width="2.3" height="2.3" opacity="0.9"/>
<rect x="1021.35" y="976.35" width="2.3" height="2.3" opacity="0.8"/><rect x="1024.35" y="976.35" width="2.3" height="2.3" opacity="0.8"/><rect x="1027.35" y="976.35" width="2.3" height="2.3" opacity="0.8"/><rect x="1030.35" y="976.35" width="2.3" height="2.3" opacity="0.8"/><rect x="1032.95" y="976.35" width="2.3" height="2.3" opacity="0.8"/>
<rect x="1021.35" y="979.15" width="2.3" height="2.3" opacity="0.7"/><rect x="1024.35" y="979.15" width="2.3" height="2.3" opacity="0.7"/><rect x="1027.35" y="979.15" width="2.3" height="2.3" opacity="0.7"/><rect x="1030.35" y="979.15" width="2.3" height="2.3" opacity="0.7"/><rect x="1032.95" y="979.15" width="2.3" height="2.3" opacity="0.7"/>
</g>
<path d="M1038 972 h6.5 l-3.25 3.8 z" fill="#2a2a2a"/>
<!-- layout -->
<g fill="#c4dcf4" stroke="#1e3a6a" stroke-width="1.1">
<rect x="1051.5" y="967.5" width="7" height="6" rx="1"/><rect x="1058.5" y="967.5" width="7" height="6" rx="1"/>
<rect x="1051.5" y="973.5" width="7" height="6" rx="1"/><rect x="1058.5" y="973.5" width="7" height="6" rx="1"/>
</g>
<g fill="#8eb0d8"><rect x="1053.5" y="969.3" width="3" height="2.4"/><rect x="1060.5" y="969.3" width="3" height="2.4"/><rect x="1053.5" y="975.3" width="3" height="2.4"/><rect x="1060.5" y="975.3" width="3" height="2.4"/></g>
<path d="M1069 972 h6.5 l-3.25 3.8 z" fill="#2a2a2a"/>
</svg>
<!-- ============ TIMELINE ============ -->
<div class="a" style="left:0;top:990px;width:1920px;height:50px;background:#cecece"></div>
<svg style="left:0;top:990px" width="1920" height="50">
<defs>
<linearGradient id="tsg" x1="0" y1="0" x2="1" y2="1"><stop offset="0" stop-color="#f4f8fc"/><stop offset="1" stop-color="#b4cce6"/></linearGradient>
<linearGradient id="tbg" x1="0" y1="0" x2="1" y2="0"><stop offset="0" stop-color="#c8dcf4"/><stop offset="1" stop-color="#88a8d4"/></linearGradient>
</defs>
<g fill="#4a4a4a">
<rect x="11" y="17" width="2" height="14"/><path d="M23 17.5 L13.5 24 L23 30.5 Z"/>
<path d="M35.7 24 L44.9 17.5 V30.5 Z"/><rect x="46" y="21" width="2" height="6"/>
<rect x="60" y="21" width="2" height="6"/><path d="M63.1 17.5 L72.6 24 L63.1 30.5 Z"/>
<path d="M86.1 16.4 L97.4 24 L86.1 31.7 Z"/>
<path d="M110.9 17.5 L120.4 24 L110.9 30.5 Z"/><rect x="121" y="17" width="2" height="14"/>
</g>
<rect x="144" y="9" width="212" height="4" fill="#f2a070"/>
<path d="M155 37 V42 H346 V37 M178 37 V42 M202 37 V42 M226 37 V42 M250 37 V42 M274 37 V42 M298 37 V42 M322 37 V42" fill="none" stroke="#5a5a5a" stroke-width="2"/>
<path d="M352 11 H364 V14.5 L359 19.5 V43 H357 V19.5 L352 14.5 Z" fill="#666"/>
<rect x="146.7" y="17.7" width="14.6" height="14.6" fill="url(#tsg)" stroke="#000" stroke-width="1.4"/>
<path d="M149.5 20.5 V29.5 H158.5" fill="none" stroke="#000" stroke-width="1.2"/>
<path d="M149.5 29.5 L150.5 26.5 L159.5 17.2 L162 19.6 L153 28.6 Z" fill="#f0c820" stroke="#b08000" stroke-width="0.5"/>
<path d="M149.5 29.5 L150.7 26.6 L152.9 28.5 Z" fill="#222"/>
<path d="M170.5 20.5 L173 17.5 H180 V28 L177 32.5 H170.5 Z" fill="#e8ecf2" stroke="#444" stroke-width="1"/>
<path d="M170.5 20.5 L173 17.5 H180 V27 L177.5 29 H170.5 Z" fill="#9abce0" stroke="#2a4a8a" stroke-width="1"/>
<path d="M177.5 20.5 V29 M170.5 20.5 H177.5 L180 17.5" fill="none" stroke="#2a4a8a" stroke-width="0.8"/>
<path d="M184.5 32 V19 M182 21.5 L184.5 18.5 L187 21.5" fill="none" stroke="#2a2a2a" stroke-width="1"/>
<path d="M194.5 23 L198 20 H208.5 V27.5 L205 30.5 H194.5 Z" fill="#f0f0f0" stroke="#2a6a2a" stroke-width="1"/>
<path d="M194.5 23 L198 20 V27.5 L194.5 30.5 Z M205 23 L208.5 20 V27.5 L205 30.5 Z" fill="#6aa860" stroke="#2a6a2a" stroke-width="0.8"/>
<path d="M199.5 21 L203.5 17 V29 L199.5 33 Z" fill="#f0d0c0" stroke="#b04a10" stroke-width="1"/>
<rect x="218.7" y="17.7" width="14.6" height="14.6" fill="url(#tsg)" stroke="#000" stroke-width="1.4"/>
<path d="M221.5 20.5 V29.5 H230.5" fill="none" stroke="#000" stroke-width="1.2"/>
<path d="M221.5 29.5 L222.5 26.5 L231.5 17.2 L234 19.6 L225 28.6 Z" fill="#f0c820" stroke="#b08000" stroke-width="0.5"/>
<path d="M221.5 29.5 L222.7 26.6 L224.9 28.5 Z" fill="#222"/>
<path d="M242.5 20.5 L245 17.5 H252 V28 L249 32.5 H242.5 Z" fill="#e8ecf2" stroke="#444" stroke-width="1"/>
<path d="M242.5 20.5 L245 17.5 H252 V27 L249.5 29 H242.5 Z" fill="#9abce0" stroke="#2a4a8a" stroke-width="1"/>
<path d="M249.5 20.5 V29 M242.5 20.5 H249.5 L252 17.5" fill="none" stroke="#2a4a8a" stroke-width="0.8"/>
<path d="M256.5 32 V19 M254 21.5 L256.5 18.5 L259 21.5" fill="none" stroke="#2a2a2a" stroke-width="1"/>
<path d="M266.8 20 Q266.8 19 268 19 L270.5 20 L271.5 23 V31.5 H268 Q266.8 31.5 266.8 30 Z" fill="#f4f4f4" stroke="#444" stroke-width="1"/>
<path d="M273.5 17 V33" stroke="#333" stroke-width="1"/>
<path d="M280.2 20 Q280.2 19 279 19 L276.5 20 L275.5 23 L276.5 24 V30 Q276.5 31.5 278 31.5 H279 Q280.2 31.5 280.2 30 Z" fill="#9abce0" stroke="#2a4a8a" stroke-width="1"/>
<rect x="290.7" y="17.7" width="14.6" height="14.6" fill="url(#tsg)" stroke="#000" stroke-width="1.4"/>
<path d="M293.5 20.5 V29.5 H302.5" fill="none" stroke="#000" stroke-width="1.2"/>
<path d="M293.5 29.5 L294.5 26.5 L303.5 17.2 L306 19.6 L297 28.6 Z" fill="#f0c820" stroke="#b08000" stroke-width="0.5"/>
<path d="M293.5 29.5 L294.7 26.6 L296.9 28.5 Z" fill="#222"/>
<rect x="314.7" y="17.7" width="14.6" height="14.6" fill="url(#tsg)" stroke="#000" stroke-width="1.4"/>
<path d="M317.5 20.5 V29.5 H326.5" fill="none" stroke="#000" stroke-width="1.2"/>
<path d="M317.5 29.5 L318.5 26.5 L327.5 17.2 L330 19.6 L321 28.6 Z" fill="#f0c820" stroke="#b08000" stroke-width="0.5"/>
<path d="M317.5 29.5 L318.7 26.6 L320.9 28.5 Z" fill="#222"/>
<path d="M338.5 20.5 L341 17.5 H348 V28 L345 32.5 H338.5 Z" fill="#e8ecf2" stroke="#444" stroke-width="1"/>
<path d="M338.5 20.5 L341 17.5 H348 V27 L345.5 29 H338.5 Z" fill="#9abce0" stroke="#2a4a8a" stroke-width="1"/>
<path d="M345.5 20.5 V29 M338.5 20.5 H345.5 L348 17.5" fill="none" stroke="#2a4a8a" stroke-width="0.8"/>
<path d="M352.5 32 V19 M350 21.5 L352.5 18.5 L355 21.5" fill="none" stroke="#2a2a2a" stroke-width="1"/>
<!-- gear -->
<g transform="translate(1903 1014)" fill="#555">
</g>
</svg>
<svg style="left:1895px;top:1006px" width="16" height="16" viewBox="-8 -8 16 16">
<g fill="#585858">
<circle r="5.6"/>
<rect x="-1.6" y="-8" width="3.2" height="16" rx="1"/>
<rect x="-1.6" y="-8" width="3.2" height="16" rx="1" transform="rotate(45)"/>
<rect x="-1.6" y="-8" width="3.2" height="16" rx="1" transform="rotate(90)"/>
<rect x="-1.6" y="-8" width="3.2" height="16" rx="1" transform="rotate(135)"/>
</g>
<circle r="3.2" fill="#cecece"/><circle r="1.9" fill="#585858"/>
</svg>

<!-- ============ VIEWCUBE ============ -->
<svg style="left:1800px;top:80px" width="120" height="110">
<defs>
<filter id="blur" x="-50%" y="-50%" width="200%" height="200%"><feGaussianBlur stdDeviation="5"/></filter>
<linearGradient id="vcf" x1="0" y1="0" x2="0" y2="1"><stop offset="0" stop-color="#ededed"/><stop offset="1" stop-color="#d9d9d9"/></linearGradient>
<linearGradient id="vct" x1="0" y1="0" x2="0" y2="1"><stop offset="0" stop-color="#ececec"/><stop offset="1" stop-color="#e4e4e4"/></linearGradient>
</defs>
<polygon points="36,84 84,93 90,62 36,55" fill="#8a8a8a" opacity="0.75" filter="url(#blur)"/>
<polygon points="47,13.2 95.2,20 88.3,57 33.3,48.6" fill="url(#vct)"/>
<polygon points="33.3,48.6 88.3,57 84,86.2 37.5,77.7" fill="url(#vcf)"/>
<polygon points="95.2,20 88.3,57 84,86.2 89,60" fill="#d4d4d4"/>
<polygon points="44,43 79,49 77.5,62 42.5,56" fill="#e2e3e6" opacity="0.8"/>
<g fill="none" stroke="#8e8e8e" stroke-width="0.9" stroke-dasharray="6,5">
<polyline points="33.3,48.6 47,13.2 95.2,20 88.3,57 33.3,48.6 37.5,77.7 84,86.2 88.3,57"/>
<line x1="95.2" y1="20" x2="89" y2="60"/>
</g>
<text x="0" y="0" transform="translate(69.5 33) rotate(-80)" font-family="Liberation Sans" font-weight="bold" font-size="10.5" fill="#9aa0a6" text-anchor="middle">TOP</text>
<text x="0" y="0" transform="translate(61 72) rotate(9)" font-family="Liberation Sans" font-weight="bold" font-size="9.5" fill="#9aa0a6" text-anchor="middle" letter-spacing="0.5">LEFT</text>
</svg>

<svg style="left:0;top:0" width="1920" height="1040">
<defs><linearGradient id="flg" gradientUnits="userSpaceOnUse" x1="0" y1="140" x2="0" y2="720"><stop offset="0" stop-color="#cd8253"/><stop offset="1" stop-color="#db8d5d"/></linearGradient><linearGradient id="wlg" gradientUnits="userSpaceOnUse" x1="0" y1="140" x2="0" y2="720"><stop offset="0" stop-color="#d08555"/><stop offset="1" stop-color="#dd8f5f"/></linearGradient></defs>
<polygon points="1135.0,165.0 1135.0,210.0 977.5,764.0 977.5,717.5" fill="#947866"/>
<polygon points="828.3,691.2 836.5,693.3 838.2,700.0 968.5,722.1 968.5,715.4 977.5,717.5 977.5,764.0 827.3,739.0" fill="#86573a"/>
<polygon points="995.2,147.3 1125.0,169.0 968.5,722.1 838.2,700.0" fill="url(#flg)"/>
<polygon points="985.0,139.0 994.0,140.0 836.5,693.3 828.3,691.2" fill="url(#wlg)"/>
<polygon points="994.0,140.0 995.2,147.3 838.2,700.0 836.5,693.3" fill="#7a4a2c"/>
<polygon points="1126.0,163.0 1135.0,165.0 977.5,717.5 968.5,715.4" fill="url(#wlg)"/>
<polygon points="832.3,698.2 836.5,699.2 968.5,722.1 972.3,722.7 972.3,729.2 832.3,705.4" fill="#8d5d3e"/>
<polyline points="836.5,699.2 832.3,698.2 832.3,705.4 972.3,729.2 972.3,722.7 968.5,722.1" fill="none" stroke="#1a1008" stroke-width="1.8"/>
<line x1="998.7" y1="158.3" x2="1093.7" y2="174.4" stroke="#1a1008" stroke-width="7.2" stroke-linecap="round"/>
<line x1="998.7" y1="157.1" x2="1093.7" y2="173.2" stroke="#74462a" stroke-width="7.0" stroke-linecap="round"/>
<line x1="998.7" y1="155.7" x2="1093.7" y2="171.8" stroke="#2a1a0e" stroke-width="7.0" stroke-linecap="round"/>
<line x1="998.7" y1="155.7" x2="1093.7" y2="171.8" stroke="url(#flg)" stroke-width="5.4" stroke-linecap="round"/>
<line x1="994.8" y1="171.9" x2="1089.8" y2="188.0" stroke="#1a1008" stroke-width="7.2" stroke-linecap="round"/>
<line x1="994.8" y1="170.7" x2="1089.8" y2="186.8" stroke="#74462a" stroke-width="7.0" stroke-linecap="round"/>
<line x1="994.8" y1="169.3" x2="1089.8" y2="185.4" stroke="#2a1a0e" stroke-width="7.0" stroke-linecap="round"/>
<line x1="994.8" y1="169.3" x2="1089.8" y2="185.4" stroke="url(#flg)" stroke-width="5.4" stroke-linecap="round"/>
<line x1="990.9" y1="185.6" x2="1085.9" y2="201.7" stroke="#1a1008" stroke-width="7.2" stroke-linecap="round"/>
<line x1="990.9" y1="184.4" x2="1085.9" y2="200.5" stroke="#74462a" stroke-width="7.0" stroke-linecap="round"/>
<line x1="990.9" y1="183.0" x2="1085.9" y2="199.1" stroke="#2a1a0e" stroke-width="7.0" stroke-linecap="round"/>
<line x1="990.9" y1="183.0" x2="1085.9" y2="199.1" stroke="url(#flg)" stroke-width="5.4" stroke-linecap="round"/>
<line x1="987.1" y1="199.2" x2="1082.1" y2="215.3" stroke="#1a1008" stroke-width="7.2" stroke-linecap="round"/>
<line x1="987.1" y1="198.0" x2="1082.1" y2="214.1" stroke="#74462a" stroke-width="7.0" stroke-linecap="round"/>
<line x1="987.1" y1="196.6" x2="1082.1" y2="212.7" stroke="#2a1a0e" stroke-width="7.0" stroke-linecap="round"/>
<line x1="987.1" y1="196.6" x2="1082.1" y2="212.7" stroke="url(#flg)" stroke-width="5.4" stroke-linecap="round"/>
<line x1="983.2" y1="212.9" x2="1078.2" y2="229.0" stroke="#1a1008" stroke-width="7.2" stroke-linecap="round"/>
<line x1="983.2" y1="211.7" x2="1078.2" y2="227.8" stroke="#74462a" stroke-width="7.0" stroke-linecap="round"/>
<line x1="983.2" y1="210.3" x2="1078.2" y2="226.4" stroke="#2a1a0e" stroke-width="7.0" stroke-linecap="round"/>
<line x1="983.2" y1="210.3" x2="1078.2" y2="226.4" stroke="url(#flg)" stroke-width="5.4" stroke-linecap="round"/>
<line x1="979.3" y1="226.5" x2="1074.3" y2="242.6" stroke="#1a1008" stroke-width="7.2" stroke-linecap="round"/>
<line x1="979.3" y1="225.3" x2="1074.3" y2="241.4" stroke="#74462a" stroke-width="7.0" stroke-linecap="round"/>
<line x1="979.3" y1="223.9" x2="1074.3" y2="240.0" stroke="#2a1a0e" stroke-width="7.0" stroke-linecap="round"/>
<line x1="979.3" y1="223.9" x2="1074.3" y2="240.0" stroke="url(#flg)" stroke-width="5.4" stroke-linecap="round"/>
<line x1="975.4" y1="240.1" x2="1070.4" y2="256.2" stroke="#1a1008" stroke-width="7.2" stroke-linecap="round"/>
<line x1="975.4" y1="238.9" x2="1070.4" y2="255.0" stroke="#74462a" stroke-width="7.0" stroke-linecap="round"/>
<line x1="975.4" y1="237.5" x2="1070.4" y2="253.6" stroke="#2a1a0e" stroke-width="7.0" stroke-linecap="round"/>
<line x1="975.4" y1="237.5" x2="1070.4" y2="253.6" stroke="url(#flg)" stroke-width="5.4" stroke-linecap="round"/>
<line x1="971.5" y1="253.8" x2="1066.5" y2="269.9" stroke="#1a1008" stroke-width="7.2" stroke-linecap="round"/>
<line x1="971.5" y1="252.6" x2="1066.5" y2="268.7" stroke="#74462a" stroke-width="7.0" stroke-linecap="round"/>
<line x1="971.5" y1="251.2" x2="1066.5" y2="267.3" stroke="#2a1a0e" stroke-width="7.0" stroke-linecap="round"/>
<line x1="971.5" y1="251.2" x2="1066.5" y2="267.3" stroke="url(#flg)" stroke-width="5.4" stroke-linecap="round"/>
<line x1="967.7" y1="267.4" x2="1062.7" y2="283.5" stroke="#1a1008" stroke-width="7.2" stroke-linecap="round"/>
<line x1="967.7" y1="266.2" x2="1062.7" y2="282.3" stroke="#74462a" stroke-width="7.0" stroke-linecap="round"/>
<line x1="967.7" y1="264.8" x2="1062.7" y2="280.9" stroke="#2a1a0e" stroke-width="7.0" stroke-linecap="round"/>
<line x1="967.7" y1="264.8" x2="1062.7" y2="280.9" stroke="url(#flg)" stroke-width="5.4" stroke-linecap="round"/>
<line x1="963.8" y1="281.1" x2="1058.8" y2="297.2" stroke="#1a1008" stroke-width="7.2" stroke-linecap="round"/>
<line x1="963.8" y1="279.9" x2="1058.8" y2="296.0" stroke="#74462a" stroke-width="7.0" stroke-linecap="round"/>
<line x1="963.8" y1="278.5" x2="1058.8" y2="294.6" stroke="#2a1a0e" stroke-width="7.0" stroke-linecap="round"/>
<line x1="963.8" y1="278.5" x2="1058.8" y2="294.6" stroke="url(#flg)" stroke-width="5.4" stroke-linecap="round"/>
<line x1="959.9" y1="294.7" x2="1054.9" y2="310.8" stroke="#1a1008" stroke-width="7.2" stroke-linecap="round"/>
<line x1="959.9" y1="293.5" x2="1054.9" y2="309.6" stroke="#74462a" stroke-width="7.0" stroke-linecap="round"/>
<line x1="959.9" y1="292.1" x2="1054.9" y2="308.2" stroke="#2a1a0e" stroke-width="7.0" stroke-linecap="round"/>
<line x1="959.9" y1="292.1" x2="1054.9" y2="308.2" stroke="url(#flg)" stroke-width="5.4" stroke-linecap="round"/>
<line x1="956.0" y1="308.3" x2="1051.0" y2="324.4" stroke="#1a1008" stroke-width="7.2" stroke-linecap="round"/>
<line x1="956.0" y1="307.1" x2="1051.0" y2="323.2" stroke="#74462a" stroke-width="7.0" stroke-linecap="round"/>
<line x1="956.0" y1="305.7" x2="1051.0" y2="321.8" stroke="#2a1a0e" stroke-width="7.0" stroke-linecap="round"/>
<line x1="956.0" y1="305.7" x2="1051.0" y2="321.8" stroke="url(#flg)" stroke-width="5.4" stroke-linecap="round"/>
<line x1="952.1" y1="322.0" x2="1047.1" y2="338.1" stroke="#1a1008" stroke-width="7.2" stroke-linecap="round"/>
<line x1="952.1" y1="320.8" x2="1047.1" y2="336.9" stroke="#74462a" stroke-width="7.0" stroke-linecap="round"/>
<line x1="952.1" y1="319.4" x2="1047.1" y2="335.5" stroke="#2a1a0e" stroke-width="7.0" stroke-linecap="round"/>
<line x1="952.1" y1="319.4" x2="1047.1" y2="335.5" stroke="url(#flg)" stroke-width="5.4" stroke-linecap="round"/>
<line x1="948.3" y1="335.6" x2="1043.3" y2="351.7" stroke="#1a1008" stroke-width="7.2" stroke-linecap="round"/>
<line x1="948.3" y1="334.4" x2="1043.3" y2="350.5" stroke="#74462a" stroke-width="7.0" stroke-linecap="round"/>
<line x1="948.3" y1="333.0" x2="1043.3" y2="349.1" stroke="#2a1a0e" stroke-width="7.0" stroke-linecap="round"/>
<line x1="948.3" y1="333.0" x2="1043.3" y2="349.1" stroke="url(#flg)" stroke-width="5.4" stroke-linecap="round"/>
<line x1="944.4" y1="349.3" x2="1039.4" y2="365.4" stroke="#1a1008" stroke-width="7.2" stroke-linecap="round"/>
<line x1="944.4" y1="348.1" x2="1039.4" y2="364.2" stroke="#74462a" stroke-width="7.0" stroke-linecap="round"/>
<line x1="944.4" y1="346.7" x2="1039.4" y2="362.8" stroke="#2a1a0e" stroke-width="7.0" stroke-linecap="round"/>
<line x1="944.4" y1="346.7" x2="1039.4" y2="362.8" stroke="url(#flg)" stroke-width="5.4" stroke-linecap="round"/>
<line x1="940.5" y1="362.9" x2="1035.5" y2="379.0" stroke="#1a1008" stroke-width="7.2" stroke-linecap="round"/>
<line x1="940.5" y1="361.7" x2="1035.5" y2="377.8" stroke="#74462a" stroke-width="7.0" stroke-linecap="round"/>
<line x1="940.5" y1="360.3" x2="1035.5" y2="376.4" stroke="#2a1a0e" stroke-width="7.0" stroke-linecap="round"/>
<line x1="940.5" y1="360.3" x2="1035.5" y2="376.4" stroke="url(#flg)" stroke-width="5.4" stroke-linecap="round"/>
<line x1="936.6" y1="376.5" x2="1031.6" y2="392.6" stroke="#1a1008" stroke-width="7.2" stroke-linecap="round"/>
<line x1="936.6" y1="375.3" x2="1031.6" y2="391.4" stroke="#74462a" stroke-width="7.0" stroke-linecap="round"/>
<line x1="936.6" y1="373.9" x2="1031.6" y2="390.0" stroke="#2a1a0e" stroke-width="7.0" stroke-linecap="round"/>
<line x1="936.6" y1="373.9" x2="1031.6" y2="390.0" stroke="url(#flg)" stroke-width="5.4" stroke-linecap="round"/>
<line x1="932.7" y1="390.2" x2="1027.7" y2="406.3" stroke="#1a1008" stroke-width="7.2" stroke-linecap="round"/>
<line x1="932.7" y1="389.0" x2="1027.7" y2="405.1" stroke="#74462a" stroke-width="7.0" stroke-linecap="round"/>
<line x1="932.7" y1="387.6" x2="1027.7" y2="403.7" stroke="#2a1a0e" stroke-width="7.0" stroke-linecap="round"/>
<line x1="932.7" y1="387.6" x2="1027.7" y2="403.7" stroke="url(#flg)" stroke-width="5.4" stroke-linecap="round"/>
<line x1="928.9" y1="403.8" x2="1023.9" y2="419.9" stroke="#1a1008" stroke-width="7.2" stroke-linecap="round"/>
<line x1="928.9" y1="402.6" x2="1023.9" y2="418.7" stroke="#74462a" stroke-width="7.0" stroke-linecap="round"/>
<line x1="928.9" y1="401.2" x2="1023.9" y2="417.3" stroke="#2a1a0e" stroke-width="7.0" stroke-linecap="round"/>
<line x1="928.9" y1="401.2" x2="1023.9" y2="417.3" stroke="url(#flg)" stroke-width="5.4" stroke-linecap="round"/>
<line x1="925.0" y1="417.5" x2="1020.0" y2="433.6" stroke="#1a1008" stroke-width="7.2" stroke-linecap="round"/>
<line x1="925.0" y1="416.3" x2="1020.0" y2="432.4" stroke="#74462a" stroke-width="7.0" stroke-linecap="round"/>
<line x1="925.0" y1="414.9" x2="1020.0" y2="431.0" stroke="#2a1a0e" stroke-width="7.0" stroke-linecap="round"/>
<line x1="925.0" y1="414.9" x2="1020.0" y2="431.0" stroke="url(#flg)" stroke-width="5.4" stroke-linecap="round"/>
<line x1="921.1" y1="431.1" x2="1016.1" y2="447.2" stroke="#1a1008" stroke-width="7.2" stroke-linecap="round"/>
<line x1="921.1" y1="429.9" x2="1016.1" y2="446.0" stroke="#74462a" stroke-width="7.0" stroke-linecap="round"/>
<line x1="921.1" y1="428.5" x2="1016.1" y2="444.6" stroke="#2a1a0e" stroke-width="7.0" stroke-linecap="round"/>
<line x1="921.1" y1="428.5" x2="1016.1" y2="444.6" stroke="url(#flg)" stroke-width="5.4" stroke-linecap="round"/>
<line x1="917.2" y1="444.7" x2="1012.2" y2="460.8" stroke="#1a1008" stroke-width="7.2" stroke-linecap="round"/>
<line x1="917.2" y1="443.5" x2="1012.2" y2="459.6" stroke="#74462a" stroke-width="7.0" stroke-linecap="round"/>
<line x1="917.2" y1="442.1" x2="1012.2" y2="458.2" stroke="#2a1a0e" stroke-width="7.0" stroke-linecap="round"/>
<line x1="917.2" y1="442.1" x2="1012.2" y2="458.2" stroke="url(#flg)" stroke-width="5.4" stroke-linecap="round"/>
<line x1="913.3" y1="458.4" x2="1008.3" y2="474.5" stroke="#1a1008" stroke-width="7.2" stroke-linecap="round"/>
<line x1="913.3" y1="457.2" x2="1008.3" y2="473.3" stroke="#74462a" stroke-width="7.0" stroke-linecap="round"/>
<line x1="913.3" y1="455.8" x2="1008.3" y2="471.9" stroke="#2a1a0e" stroke-width="7.0" stroke-linecap="round"/>
<line x1="913.3" y1="455.8" x2="1008.3" y2="471.9" stroke="url(#flg)" stroke-width="5.4" stroke-linecap="round"/>
<line x1="909.5" y1="472.0" x2="1004.5" y2="488.1" stroke="#1a1008" stroke-width="7.2" stroke-linecap="round"/>
<line x1="909.5" y1="470.8" x2="1004.5" y2="486.9" stroke="#74462a" stroke-width="7.0" stroke-linecap="round"/>
<line x1="909.5" y1="469.4" x2="1004.5" y2="485.5" stroke="#2a1a0e" stroke-width="7.0" stroke-linecap="round"/>
<line x1="909.5" y1="469.4" x2="1004.5" y2="485.5" stroke="url(#flg)" stroke-width="5.4" stroke-linecap="round"/>
<line x1="905.6" y1="485.7" x2="1000.6" y2="501.8" stroke="#1a1008" stroke-width="7.2" stroke-linecap="round"/>
<line x1="905.6" y1="484.5" x2="1000.6" y2="500.6" stroke="#74462a" stroke-width="7.0" stroke-linecap="round"/>
<line x1="905.6" y1="483.1" x2="1000.6" y2="499.2" stroke="#2a1a0e" stroke-width="7.0" stroke-linecap="round"/>
<line x1="905.6" y1="483.1" x2="1000.6" y2="499.2" stroke="url(#flg)" stroke-width="5.4" stroke-linecap="round"/>
<line x1="901.7" y1="499.3" x2="996.7" y2="515.4" stroke="#1a1008" stroke-width="7.2" stroke-linecap="round"/>
<line x1="901.7" y1="498.1" x2="996.7" y2="514.2" stroke="#74462a" stroke-width="7.0" stroke-linecap="round"/>
<line x1="901.7" y1="496.7" x2="996.7" y2="512.8" stroke="#2a1a0e" stroke-width="7.0" stroke-linecap="round"/>
<line x1="901.7" y1="496.7" x2="996.7" y2="512.8" stroke="url(#flg)" stroke-width="5.4" stroke-linecap="round"/>
<line x1="897.8" y1="512.9" x2="992.8" y2="529.0" stroke="#1a1008" stroke-width="7.2" stroke-linecap="round"/>
<line x1="897.8" y1="511.7" x2="992.8" y2="527.8" stroke="#74462a" stroke-width="7.0" stroke-linecap="round"/>
<line x1="897.8" y1="510.3" x2="992.8" y2="526.4" stroke="#2a1a0e" stroke-width="7.0" stroke-linecap="round"/>
<line x1="897.8" y1="510.3" x2="992.8" y2="526.4" stroke="url(#flg)" stroke-width="5.4" stroke-linecap="round"/>
<line x1="893.9" y1="526.6" x2="988.9" y2="542.7" stroke="#1a1008" stroke-width="7.2" stroke-linecap="round"/>
<line x1="893.9" y1="525.4" x2="988.9" y2="541.5" stroke="#74462a" stroke-width="7.0" stroke-linecap="round"/>
<line x1="893.9" y1="524.0" x2="988.9" y2="540.1" stroke="#2a1a0e" stroke-width="7.0" stroke-linecap="round"/>
<line x1="893.9" y1="524.0" x2="988.9" y2="540.1" stroke="url(#flg)" stroke-width="5.4" stroke-linecap="round"/>
<line x1="890.1" y1="540.2" x2="985.1" y2="556.3" stroke="#1a1008" stroke-width="7.2" stroke-linecap="round"/>
<line x1="890.1" y1="539.0" x2="985.1" y2="555.1" stroke="#74462a" stroke-width="7.0" stroke-linecap="round"/>
<line x1="890.1" y1="537.6" x2="985.1" y2="553.7" stroke="#2a1a0e" stroke-width="7.0" stroke-linecap="round"/>
<line x1="890.1" y1="537.6" x2="985.1" y2="553.7" stroke="url(#flg)" stroke-width="5.4" stroke-linecap="round"/>
<line x1="886.2" y1="553.9" x2="981.2" y2="570.0" stroke="#1a1008" stroke-width="7.2" stroke-linecap="round"/>
<line x1="886.2" y1="552.7" x2="981.2" y2="568.8" stroke="#74462a" stroke-width="7.0" stroke-linecap="round"/>
<line x1="886.2" y1="551.3" x2="981.2" y2="567.4" stroke="#2a1a0e" stroke-width="7.0" stroke-linecap="round"/>
<line x1="886.2" y1="551.3" x2="981.2" y2="567.4" stroke="url(#flg)" stroke-width="5.4" stroke-linecap="round"/>
<line x1="882.3" y1="567.5" x2="977.3" y2="583.6" stroke="#1a1008" stroke-width="7.2" stroke-linecap="round"/>
<line x1="882.3" y1="566.3" x2="977.3" y2="582.4" stroke="#74462a" stroke-width="7.0" stroke-linecap="round"/>
<line x1="882.3" y1="564.9" x2="977.3" y2="581.0" stroke="#2a1a0e" stroke-width="7.0" stroke-linecap="round"/>
<line x1="882.3" y1="564.9" x2="977.3" y2="581.0" stroke="url(#flg)" stroke-width="5.4" stroke-linecap="round"/>
<line x1="878.4" y1="581.1" x2="973.4" y2="597.2" stroke="#1a1008" stroke-width="7.2" stroke-linecap="round"/>
<line x1="878.4" y1="579.9" x2="973.4" y2="596.0" stroke="#74462a" stroke-width="7.0" stroke-linecap="round"/>
<line x1="878.4" y1="578.5" x2="973.4" y2="594.6" stroke="#2a1a0e" stroke-width="7.0" stroke-linecap="round"/>
<line x1="878.4" y1="578.5" x2="973.4" y2="594.6" stroke="url(#flg)" stroke-width="5.4" stroke-linecap="round"/>
<line x1="874.5" y1="594.8" x2="969.5" y2="610.9" stroke="#1a1008" stroke-width="7.2" stroke-linecap="round"/>
<line x1="874.5" y1="593.6" x2="969.5" y2="609.7" stroke="#74462a" stroke-width="7.0" stroke-linecap="round"/>
<line x1="874.5" y1="592.2" x2="969.5" y2="608.3" stroke="#2a1a0e" stroke-width="7.0" stroke-linecap="round"/>
<line x1="874.5" y1="592.2" x2="969.5" y2="608.3" stroke="url(#flg)" stroke-width="5.4" stroke-linecap="round"/>
<line x1="870.7" y1="608.4" x2="965.7" y2="624.5" stroke="#1a1008" stroke-width="7.2" stroke-linecap="round"/>
<line x1="870.7" y1="607.2" x2="965.7" y2="623.3" stroke="#74462a" stroke-width="7.0" stroke-linecap="round"/>
<line x1="870.7" y1="605.8" x2="965.7" y2="621.9" stroke="#2a1a0e" stroke-width="7.0" stroke-linecap="round"/>
<line x1="870.7" y1="605.8" x2="965.7" y2="621.9" stroke="url(#flg)" stroke-width="5.4" stroke-linecap="round"/>
<line x1="866.8" y1="622.1" x2="961.8" y2="638.2" stroke="#1a1008" stroke-width="7.2" stroke-linecap="round"/>
<line x1="866.8" y1="620.9" x2="961.8" y2="637.0" stroke="#74462a" stroke-width="7.0" stroke-linecap="round"/>
<line x1="866.8" y1="619.5" x2="961.8" y2="635.6" stroke="#2a1a0e" stroke-width="7.0" stroke-linecap="round"/>
<line x1="866.8" y1="619.5" x2="961.8" y2="635.6" stroke="url(#flg)" stroke-width="5.4" stroke-linecap="round"/>
<line x1="862.9" y1="635.7" x2="957.9" y2="651.8" stroke="#1a1008" stroke-width="7.2" stroke-linecap="round"/>
<line x1="862.9" y1="634.5" x2="957.9" y2="650.6" stroke="#74462a" stroke-width="7.0" stroke-linecap="round"/>
<line x1="862.9" y1="633.1" x2="957.9" y2="649.2" stroke="#2a1a0e" stroke-width="7.0" stroke-linecap="round"/>
<line x1="862.9" y1="633.1" x2="957.9" y2="649.2" stroke="url(#flg)" stroke-width="5.4" stroke-linecap="round"/>
<line x1="859.0" y1="649.3" x2="954.0" y2="665.4" stroke="#1a1008" stroke-width="7.2" stroke-linecap="round"/>
<line x1="859.0" y1="648.1" x2="954.0" y2="664.2" stroke="#74462a" stroke-width="7.0" stroke-linecap="round"/>
<line x1="859.0" y1="646.7" x2="954.0" y2="662.8" stroke="#2a1a0e" stroke-width="7.0" stroke-linecap="round"/>
<line x1="859.0" y1="646.7" x2="954.0" y2="662.8" stroke="url(#flg)" stroke-width="5.4" stroke-linecap="round"/>
<line x1="855.1" y1="663.0" x2="950.1" y2="679.1" stroke="#1a1008" stroke-width="7.2" stroke-linecap="round"/>
<line x1="855.1" y1="661.8" x2="950.1" y2="677.9" stroke="#74462a" stroke-width="7.0" stroke-linecap="round"/>
<line x1="855.1" y1="660.4" x2="950.1" y2="676.5" stroke="#2a1a0e" stroke-width="7.0" stroke-linecap="round"/>
<line x1="855.1" y1="660.4" x2="950.1" y2="676.5" stroke="url(#flg)" stroke-width="5.4" stroke-linecap="round"/>
<line x1="851.3" y1="676.6" x2="946.3" y2="692.7" stroke="#1a1008" stroke-width="7.2" stroke-linecap="round"/>
<line x1="851.3" y1="675.4" x2="946.3" y2="691.5" stroke="#74462a" stroke-width="7.0" stroke-linecap="round"/>
<line x1="851.3" y1="674.0" x2="946.3" y2="690.1" stroke="#2a1a0e" stroke-width="7.0" stroke-linecap="round"/>
<line x1="851.3" y1="674.0" x2="946.3" y2="690.1" stroke="url(#flg)" stroke-width="5.4" stroke-linecap="round"/>
<line x1="847.4" y1="690.3" x2="942.4" y2="706.4" stroke="#1a1008" stroke-width="7.2" stroke-linecap="round"/>
<line x1="847.4" y1="689.1" x2="942.4" y2="705.2" stroke="#74462a" stroke-width="7.0" stroke-linecap="round"/>
<line x1="847.4" y1="687.7" x2="942.4" y2="703.8" stroke="#2a1a0e" stroke-width="7.0" stroke-linecap="round"/>
<line x1="847.4" y1="687.7" x2="942.4" y2="703.8" stroke="url(#flg)" stroke-width="5.4" stroke-linecap="round"/>
<polyline points="828.3,691.2 985.0,139.0 994.0,140.0 995.2,147.3 1125.0,169.0" fill="none" stroke="#1a1008" stroke-width="0.9"/>
<line x1="994" y1="140" x2="836.5" y2="693.3" stroke="#1a1008" stroke-width="0.9"/>
<line x1="995.2" y1="147.3" x2="838.2" y2="700" stroke="#1a1008" stroke-width="0.9"/>
<polyline points="968.5,715.4 1126.0,163.0 1135.0,165.0 1135.0,210.0 977.5,764.0 827.3,739.0 828.3,691.2 836.5,693.3 838.2,700.0 968.5,722.1 968.5,715.4 977.5,717.5 977.5,764.0" fill="none" stroke="#1a1008" stroke-width="0.9"/>
<line x1="1135" y1="165" x2="977.5" y2="717.5" stroke="#1a1008" stroke-width="0.9"/>
</svg>
</body></html>
